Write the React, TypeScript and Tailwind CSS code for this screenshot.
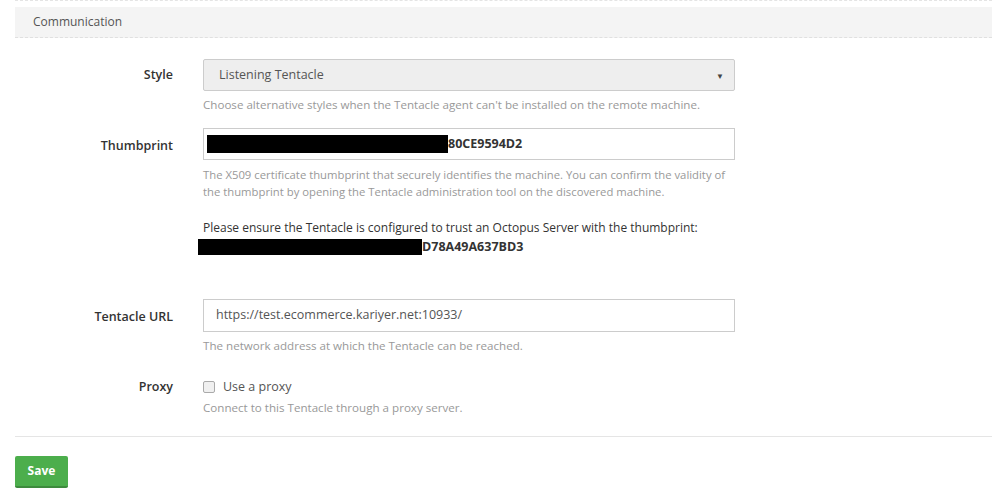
const font = { fontFamily: '"Open Sans", "Liberation Sans", sans-serif' };

const Row = ({ label, children, top = "pt-[7px]" }: { label: string; children: React.ReactNode; top?: string }) => (
  <div className="flex">
    <div className={`w-[173px] shrink-0 text-right text-[12.5px] font-semibold text-[#333] ${top}`}>{label}</div>
    <div className="ml-[30px] w-[532px]">{children}</div>
  </div>
);

const Help = ({ children, mt = "mt-[5px]" }: { children: React.ReactNode; mt?: string }) => (
  <p className={`${mt} text-[11.6px] leading-[17px] text-[#999]`}>{children}</p>
);

export default function App() {
  return (
    <div className="h-[496px] w-[1006px] bg-white" style={font}>
      <div className="mx-[15px] w-[977px] border-t border-dashed border-[#e4e4e4] pt-[6px]">
        <div className="flex h-[31px] items-center border-b border-dashed border-[#e0e0e0] bg-[#f4f4f4] pl-[18px] text-[12px] text-[#555]">
          Communication
        </div>
      </div>

      <div className="mt-[21px] flex flex-col">
        <Row label="Style">
          <div className="relative flex h-[32px] items-center rounded-[2px] border border-[#ccc] bg-[#eee] pl-[15px] text-[12.5px] text-[#555]">
            Listening Tentacle
            <span className="absolute right-[10px] top-[10px] text-[8px] text-[#444]">▼</span>
          </div>
          <Help>Choose alternative styles when the Tentacle agent can't be installed on the remote machine.</Help>
        </Row>

        <div className="mt-[15px]">
          <Row label="Thumbprint" top="pt-[9px]">
            <div className="flex h-[32px] items-center border border-[#ccc] bg-white pl-[3px] text-[12.5px] font-bold text-[#333]">
              <span className="inline-block h-[18px] w-[241px] bg-black" />
              <span>80CE9594D2</span>
            </div>
            <p className="mt-[6px] text-[11.3px] leading-[17px] text-[#999]">
              The X509 certificate thumbprint that securely identifies the machine. You can confirm the validity of the thumbprint by opening the Tentacle administration tool on the discovered machine.
            </p>
            <p className="mt-[19px] text-[12px] leading-[18px] text-[#333]">
              Please ensure the Tentacle is configured to trust an Octopus Server with the thumbprint:
            </p>
            <div className="ml-[-5px] mt-[1px] flex items-center text-[12.5px] font-bold leading-[18px] text-[#333]">
              <span className="inline-block h-[16px] w-[224px] bg-black" />
              <span>D78A49A637BD3</span>
            </div>
          </Row>
        </div>

        <div className="mt-[43px]">
          <Row label="Tentacle URL" top="pt-[9px]">
            <div className="flex h-[33px] items-center border border-[#ccc] bg-white pl-[12px] text-[12.5px] text-[#555]">
              https://test.ecommerce.kariyer.net:10933/
            </div>
            <Help mt="mt-[5px]">The network address at which the Tentacle can be reached.</Help>
          </Row>
        </div>

        <div className="mt-[24px]">
          <Row label="Proxy" top="pt-0">
            <label className="flex items-center gap-[8px] text-[12.5px] leading-[18px] text-[#555]">
              <span className="inline-block h-[12px] w-[12px] rounded-[2px] border border-[#aaa] bg-[#f0f0f0]" />
              Use a proxy
            </label>
            <Help mt="mt-[3px]">Connect to this Tentacle through a proxy server.</Help>
          </Row>
        </div>
      </div>

      <div className="mx-[15px] mt-[20px] w-[977px] border-t border-[#e5e5e5]" />
      <button className="ml-[15px] mt-[19px] h-[32px] w-[53px] rounded-[2px] border-b-2 border-[#3d8b3d] bg-[#4cae4c] text-[12px] font-bold text-white">
        Save
      </button>
    </div>
  );
}
